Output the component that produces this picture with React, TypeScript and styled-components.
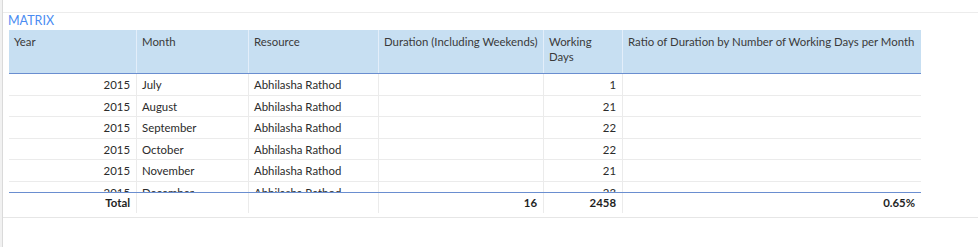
import React from 'react'
import styled, { createGlobalStyle } from 'styled-components'

const GlobalStyle = createGlobalStyle`
    html, body {
        margin: 0;
        padding: 0;
        background: #ffffff;
    }
    body {
        font-family: Lato, "Open Sans", sans-serif;
        color: #252423;
    }
`

const COLS = '128px 112px 130px 165px 79px 298px'
const FONT = 'Lato, "Open Sans", sans-serif'

const Page = styled.div`
    height: 247px;
    border-left: 2px solid #f1f1f1;
    box-sizing: border-box;
`
const Frame = styled.div`
    height: 100%;
    border-left: 1px solid #dadada;
    box-sizing: border-box;
    padding-top: 12px;
`
const Visual = styled.section`
    height: 206px;
    box-sizing: border-box;
    border-top: 1px solid #ececec;
    border-bottom: 1px solid #e6e6e6;
`
const Title = styled.div`
    height: 17px;
    padding-left: 5px;
    font-family: ${FONT};
    font-size: 12.5px;
    line-height: 15px;
    box-sizing: border-box;
    color: #4a8cf2;
`
const Table = styled.div`
    margin-left: 6px;
    width: 912px;
    font-family: ${FONT};
    font-size: 11.4px;
`
const HeaderRow = styled.div`
    display: grid;
    grid-template-columns: ${COLS};
    height: 44px;
    box-sizing: border-box;
    background: #c7dff2;
    border-bottom: 1px solid #6a8ed0;
`
const HeaderCell = styled.div<{ $last?: boolean }>`
    padding: 4px 4px 0 5px;
    line-height: 15px;
    color: #3a3a3a;
    white-space: nowrap;
    overflow: hidden;
    border-right: ${p => (p.$last ? 'none' : '1px solid #e3eefa')};
`
const Body = styled.div`
    height: 118px;
    overflow: hidden;
`
const Row = styled.div`
    display: grid;
    grid-template-columns: ${COLS};
    height: 21.6px;
    box-sizing: border-box;
    border-bottom: 1px solid #ebebeb;
`
const Cell = styled.div<{ $right?: boolean; $last?: boolean }>`
    padding: 1px 6px 0 5px;
    line-height: 20px;
    text-align: ${p => (p.$right ? 'right' : 'left')};
    white-space: nowrap;
    overflow: hidden;
    color: #2b2b2b;
    border-right: ${p => (p.$last ? 'none' : '1px solid #ebebeb')};
`
const TotalRow = styled.div`
    display: grid;
    grid-template-columns: ${COLS};
    height: 21px;
    box-sizing: border-box;
    border-top: 1px solid #6a8ed0;
    font-weight: 700;
`
const TotalCell = styled(Cell)`
    padding-top: 0;
    line-height: 20px;
    color: #1f1f1f;
`

const headers = [
    'Year',
    'Month',
    'Resource',
    'Duration (Including Weekends)',
    'Working Days',
    'Ratio of Duration by Number of Working Days per Month',
]

const rows = [
    { year: 2015, month: 'July', resource: 'Abhilasha Rathod', days: 1 },
    { year: 2015, month: 'August', resource: 'Abhilasha Rathod', days: 21 },
    { year: 2015, month: 'September', resource: 'Abhilasha Rathod', days: 22 },
    { year: 2015, month: 'October', resource: 'Abhilasha Rathod', days: 22 },
    { year: 2015, month: 'November', resource: 'Abhilasha Rathod', days: 21 },
    { year: 2015, month: 'December', resource: 'Abhilasha Rathod', days: 23 },
]

export default function App() {
    return (
        <>
            <GlobalStyle />
            <Page>
                <Frame>
                    <Visual>
                        <Title>MATRIX</Title>
                        <Table>
                            <HeaderRow>
                                {headers.map((h, i) => (
                                    <HeaderCell key={h} $last={i === headers.length - 1}>
                                        {h === 'Working Days' ? (
                                            <>Working<br />Days</>
                                        ) : h}
                                    </HeaderCell>
                                ))}
                            </HeaderRow>
                            <Body>
                                {rows.map(r => (
                                    <Row key={r.month}>
                                        <Cell $right>{r.year}</Cell>
                                        <Cell>{r.month}</Cell>
                                        <Cell>{r.resource}</Cell>
                                        <Cell $right />
                                        <Cell $right>{r.days}</Cell>
                                        <Cell $right $last />
                                    </Row>
                                ))}
                            </Body>
                            <TotalRow>
                                <TotalCell $right>Total</TotalCell>
                                <TotalCell />
                                <TotalCell />
                                <TotalCell $right>16</TotalCell>
                                <TotalCell $right>2458</TotalCell>
                                <TotalCell $right $last>0.65%</TotalCell>
                            </TotalRow>
                        </Table>
                    </Visual>
                </Frame>
            </Page>
        </>
    )
}
